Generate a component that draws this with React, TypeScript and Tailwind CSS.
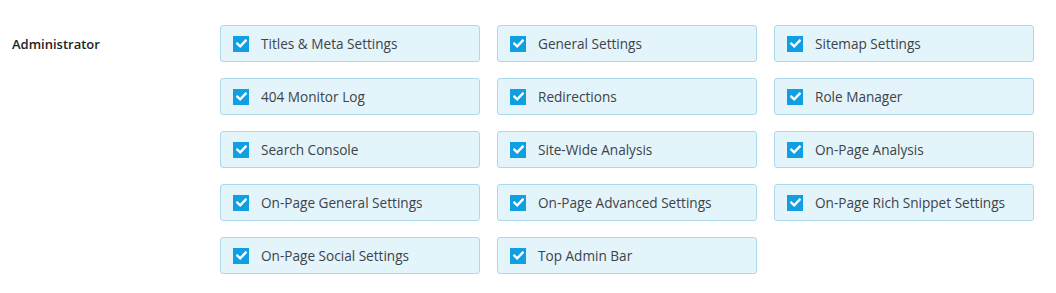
import React, { useState } from "react";

const PERMS = [
  "Titles & Meta Settings",
  "General Settings",
  "Sitemap Settings",
  "404 Monitor Log",
  "Redirections",
  "Role Manager",
  "Search Console",
  "Site-Wide Analysis",
  "On-Page Analysis",
  "On-Page General Settings",
  "On-Page Advanced Settings",
  "On-Page Rich Snippet Settings",
  "On-Page Social Settings",
  "Top Admin Bar",
];

const Check: React.FC<{ on: boolean }> = ({ on }) => (
  <span
    className={`flex h-4 w-4 shrink-0 items-center justify-center ${on ? "bg-[#109fe3]" : "bg-white border border-[#8c8f94]"}`}
  >
    {on && (
      <svg width="11" height="9" viewBox="0 0 11 9" fill="none">
        <path d="M1.3 4.6 L4.2 7.3 L9.7 1.6" stroke="white" strokeWidth="2.4" strokeLinecap="square" />
      </svg>
    )}
  </span>
);

const App: React.FC = () => {
  const [checked, setChecked] = useState<Record<string, boolean>>(
    Object.fromEntries(PERMS.map((p) => [p, true]))
  );

  return (
    <div className="min-h-[293px] bg-white font-['Open_Sans',sans-serif] text-[13px] text-[#3c434a]">
      <div className="flex pl-3 pt-[25px] pb-4">
        <div className="w-[208px] shrink-0 pt-[10px] text-[13px] font-semibold text-[#1d2327]">
          Administrator
        </div>
        <div className="grid grid-cols-[260px_260px_260px] gap-x-[17px] gap-y-[16px]">
          {PERMS.map((p) => (
            <label
              key={p}
              onClick={() => setChecked((c) => ({ ...c, [p]: !c[p] }))}
              className="flex h-[37px] cursor-pointer items-center gap-3 rounded-[3px] border border-[#acd9ed] bg-[#e4f4fb] pl-3"
            >
              <Check on={checked[p]} />
              <span className="pt-px text-[13.6px] leading-none">{p}</span>
            </label>
          ))}
        </div>
      </div>
    </div>
  );
};

export default App;
